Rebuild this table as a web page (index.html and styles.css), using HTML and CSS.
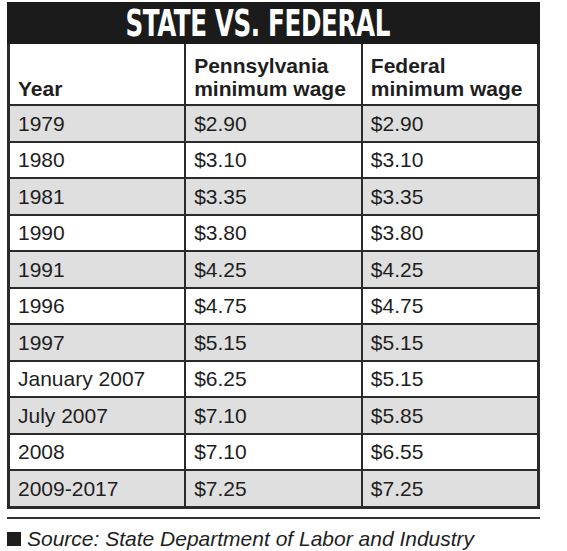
FILE: index.html
```html
<!DOCTYPE html>
<html lang="en">

<head>
    <meta charset="UTF-8">
    <title>State vs. Federal</title>
    <link rel="stylesheet" href="styles.css">
</head>

<body>
    <div class="chart">
        <div class="title"><span>STATE VS. FEDERAL</span></div>

        <table class="wages">
            <thead>
                <tr>
                    <th>Year</th>
                    <th>Pennsylvania<br>minimum wage</th>
                    <th>Federal<br>minimum wage</th>
                </tr>
            </thead>
            <tbody>
                <tr class="shade"><td>1979</td><td>$2.90</td><td>$2.90</td></tr>
                <tr><td>1980</td><td>$3.10</td><td>$3.10</td></tr>
                <tr class="shade"><td>1981</td><td>$3.35</td><td>$3.35</td></tr>
                <tr><td>1990</td><td>$3.80</td><td>$3.80</td></tr>
                <tr class="shade"><td>1991</td><td>$4.25</td><td>$4.25</td></tr>
                <tr><td>1996</td><td>$4.75</td><td>$4.75</td></tr>
                <tr class="shade"><td>1997</td><td>$5.15</td><td>$5.15</td></tr>
                <tr><td>January 2007</td><td>$6.25</td><td>$5.15</td></tr>
                <tr class="shade"><td>July 2007</td><td>$7.10</td><td>$5.85</td></tr>
                <tr><td>2008</td><td>$7.10</td><td>$6.55</td></tr>
                <tr class="shade"><td>2009-2017</td><td>$7.25</td><td>$7.25</td></tr>
            </tbody>
        </table>

        <div class="source">
            <span class="square"></span>Source: State Department of Labor and Industry
        </div>
    </div>
</body>

</html>
```

FILE: styles.css
```css
body {
    margin: 0;
    background: #fff;
    font-family: 'Liberation Sans', Arial, sans-serif;
    color: #1e1e1e;
}

.chart {
    width: 533px;
    margin: 2px 0 0 7px;
}

.title {
    height: 42px;
    background: #1b1b1b;
    color: #fff;
    text-align: center;
    overflow: hidden;
}

.title span {
    display: inline-block;
    font-family: 'DejaVu Sans Condensed', 'DejaVu Sans', sans-serif;
    font-weight: bold;
    font-size: 38px;
    line-height: 42px;
    transform: scaleX(0.72);
    letter-spacing: -0.5px;
    margin-left: -31px;
}

.wages {
    width: 533px;
    border-collapse: collapse;
    border: 3px solid #2a2a2a;
    border-top: none;
    table-layout: fixed;
}

.wages th,
.wages td {
    border: 2px solid #2a2a2a;
    padding: 0 8px;
    text-align: left;
    white-space: nowrap;
}

.wages th {
    border-top: none;
    height: 56px;
    vertical-align: bottom;
    padding-bottom: 4px;
    font-size: 21px;
    line-height: 23px;
    font-weight: bold;
}

.wages td {
    height: 33.5px;
    font-size: 21px;
    vertical-align: middle;
    padding-top: 1px;
}

.wages tr.shade td {
    background: #dfdfdf;
}

.source {
    margin-top: 8px;
    border-top: 2px solid #333;
    padding-top: 8px;
    font-size: 21px;
    font-style: italic;
    white-space: nowrap;
}

.square {
    display: inline-block;
    width: 14px;
    height: 14px;
    background: #1e1e1e;
    margin-right: 6px;
}
```
